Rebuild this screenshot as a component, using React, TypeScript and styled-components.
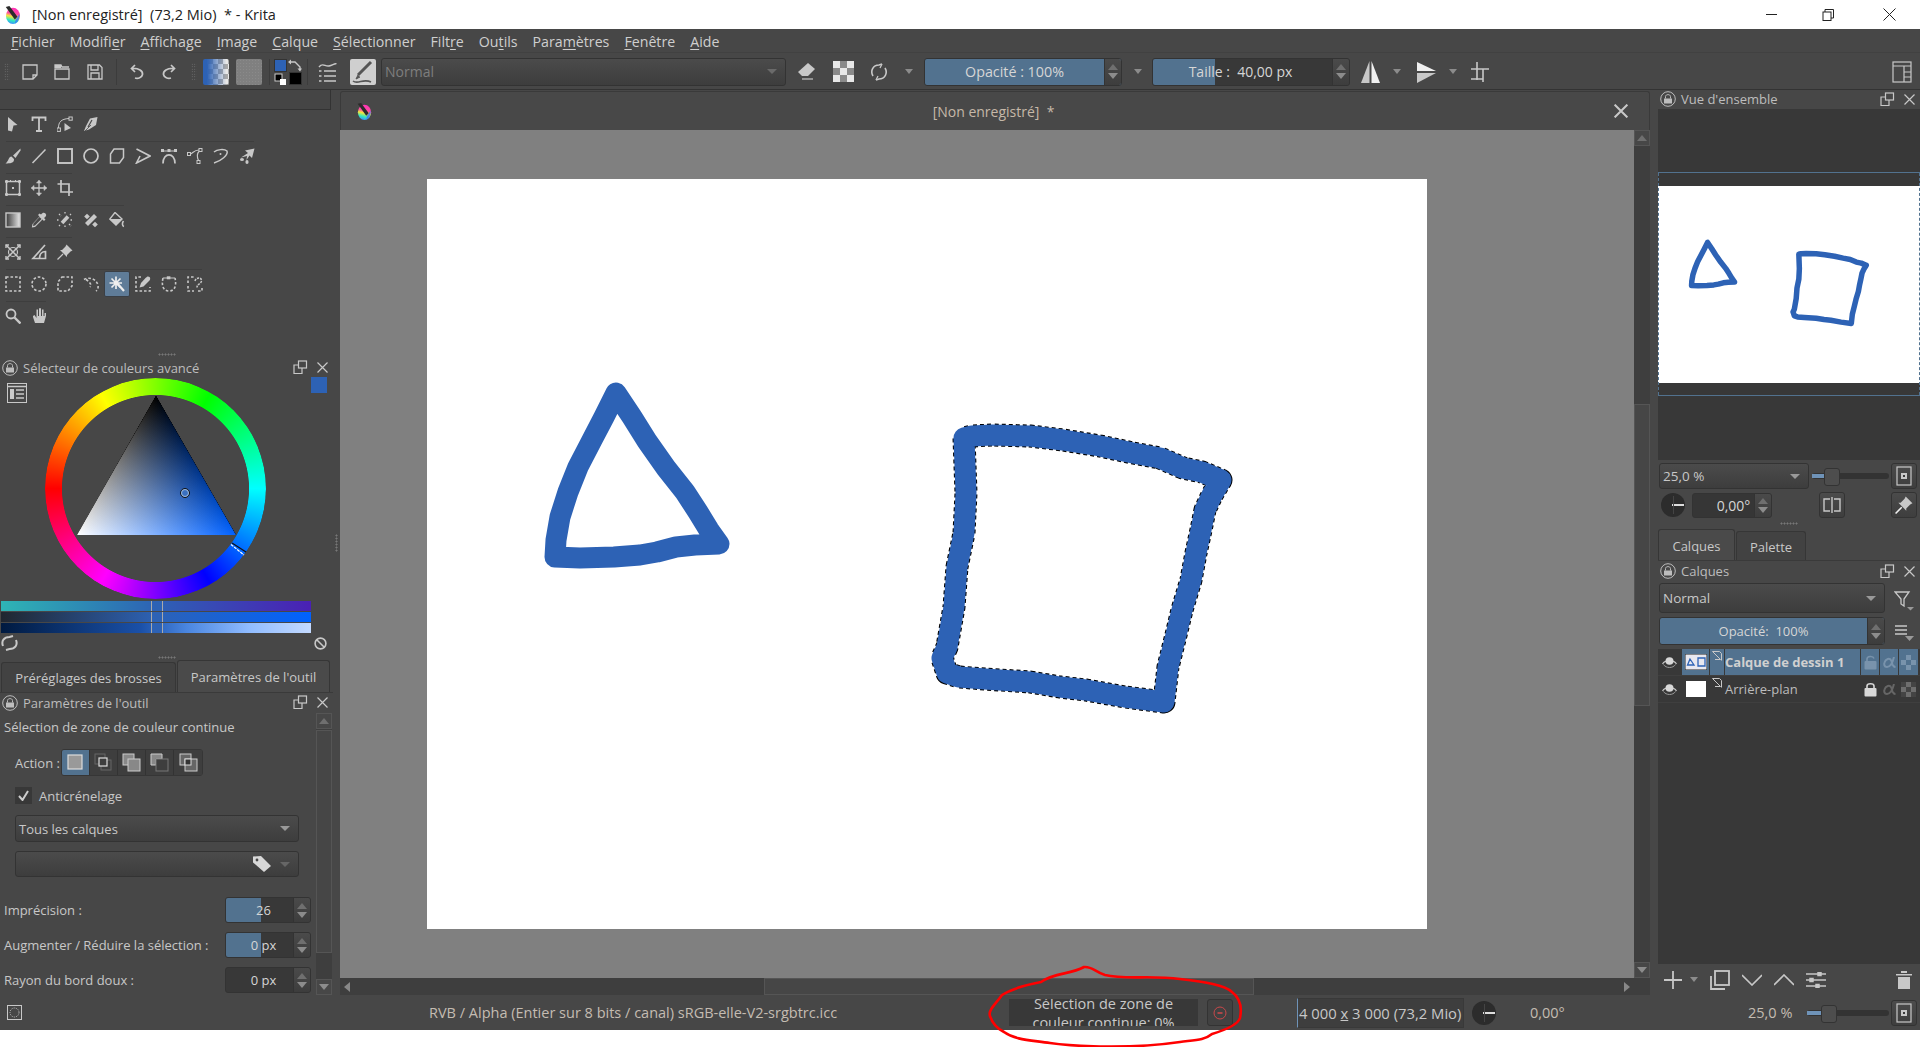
import React from "react";
import styled, { createGlobalStyle } from "styled-components";

const G = "#c8c8c8";
const Global = createGlobalStyle`
  html, body { margin: 0; padding: 0; background: #fff; }
  body { font-family: "Open Sans", "Noto Sans", "Liberation Sans", sans-serif; }
  * { box-sizing: border-box; }
`;

const TRI = "M616 393 L604 417 L592 440 L578 467 L568 492 L560 517 L556 540 L555 557 L580 558 L614 557 L640 555 L657 552 L676 547 L695 545 L719 544 L709 530 L698 512 L685 492 L666 468 L647 441 L632 417 Z";
const SQ = "M964 438 L966 493 L964 533 L957 567 L954 607 L947 647 L942 658 L947 673 L959 677 L985 679 L1030 682 L1060 687 L1086 690 L1125 697 L1164 702 L1168 667 L1176 635 L1182 610 L1191 580 L1196 553 L1201 530 L1205 510 L1212 495 L1221 480 L1202 472 L1183 468 L1160 458 L1133 453 L1100 446 L1063 440 L1030 436 L992 435 L972 436 Z";

const Root = styled.div`
  position: relative; width: 1920px; height: 1047px; overflow: hidden; background: #fff;
  display: flex; flex-direction: column; color: ${G}; font-size: 13px;
`;
const TitleBar = styled.div`
  height: 29px; background: #fff; color: #222; display: flex; align-items: center;
  font-size: 14.5px; padding-left: 4px; flex: none;
`;
const TitleText = styled.span`margin-left: 10px; white-space: pre; flex: 1;`;
const WinBtn = styled.div<{ $mr: number }>`
  width: 16px; height: 16px; margin-right: ${p => p.$mr}px; display: flex; align-items: center; justify-content: center;
`;
const MenuBar = styled.div`
  height: 24px; background: #474747; display: flex; align-items: center; gap: 15px; padding: 1px 0 0 11px; flex: none;
  font-size: 14.2px; border-bottom: 1px solid #414141;
`;
const MenuItem = styled.span`color: #cfcfcf; text-decoration: none; u { text-underline-offset: 2px; }`;
const ToolBar = styled.div`
  height: 37px; background: #474747; display: flex; align-items: center; flex: none; border-bottom: 1px solid #333; padding-top: 1px;
`;
const Slot = styled.div<{ $ml: number; $w: number }>`
  margin-left: ${p => p.$ml}px; width: ${p => p.$w}px; height: 26px; flex: none; display: flex; align-items: center; justify-content: center; position: relative;
`;
const Sep = styled.div<{ $ml: number }>`margin-left: ${p => p.$ml}px; width: 1px; height: 26px; background: #3c3c3c; flex: none;`;
const Grip = styled.div<{ $ml: number }>`
  margin-left: ${p => p.$ml}px; width: 6px; height: 18px; flex: none;
  background-image: radial-gradient(#777 40%, transparent 45%); background-size: 2.5px 2.5px;
`;
const GradientSwatch = styled.div`
  width: 26px; height: 26px; border-radius: 2px;
  background: linear-gradient(90deg, #2d62b5 15%, rgba(45,98,181,0) 90%), repeating-conic-gradient(#a8a8a8 0 25%, #e8e8e8 0 50%) 0 0 / 10px 10px;
`;
const PatternSwatch = styled.div`
  width: 26px; height: 26px; border-radius: 2px; background: #808080;
  background-image: radial-gradient(#8a8a8a 30%, transparent 40%); background-size: 3px 3px;
`;
const FgSwatch = styled.div`position: absolute; left: 0; top: 0; width: 13px; height: 13px; background: #2d62b5; border: 1px solid #333;`;
const BgSwatch = styled.div`position: absolute; right: 0; bottom: 0; width: 13px; height: 13px; background: #000; border: 1px solid #333;`;
const PresetThumb = styled.div`width: 26px; height: 26px; background: #cfcfcf; border-radius: 2px; overflow: hidden;`;
const Combo = styled.div<{ $w?: number; $h?: number; $dim?: boolean; $fs?: number }>`
  width: ${p => (p.$w ? p.$w + "px" : "100%")}; height: ${p => p.$h || 27}px; flex: none;
  border: 1px solid #333; border-radius: 3px; background: linear-gradient(#4b4b4b, #3d3d3d);
  display: flex; align-items: center; padding: 0 5px 0 3px; justify-content: space-between;
  color: ${p => (p.$dim ? "#7e7e7e" : "#c8c8c8")}; font-size: ${p => p.$fs || 13}px; gap: 8px;
`;
const Caret = styled.span<{ $dim?: boolean }>`
  width: 0; height: 0; flex: none; margin-right: 3px;
  border-left: 5px solid transparent; border-right: 5px solid transparent; border-top: 5px solid ${p => (p.$dim ? "#6a6a6a" : "#999")};
`;
const TagIco = styled.svg`flex: none; margin-right: -4px;`;
const SmallCaret = styled.span`
  width: 0; height: 0; border-left: 4.5px solid transparent; border-right: 4.5px solid transparent; border-top: 5px solid #8c8c8c;
`;
const Spin = styled.div<{ $w: number; $h: number; $bg?: string; $ml?: number }>`
  position: relative; width: ${p => p.$w}px; height: ${p => p.$h}px; flex: none; border: 1px solid #333; border-radius: 3px;
  margin-left: ${p => p.$ml || 0}px;
  background: ${p => p.$bg || "#383838"}; display: flex; overflow: hidden;
`;
const SpinField = styled.div<{ $fs?: number }>`position: relative; flex: 1; display: flex; align-items: center; justify-content: center; font-size: ${p => p.$fs || 13}px; color: #d6d6d6; white-space: pre;`;
const SpinFill = styled.div<{ $w: number }>`position: absolute; left: 0; top: 0; bottom: 0; width: ${p => p.$w}px; background: #52728f;`;
const SpinLabel = styled.span<{ $dx?: number }>`position: relative; transform: translateX(${p => p.$dx || 0}px);`;
const SpinArrows = styled.div`
  width: 17px; flex: none; background: linear-gradient(#4a4a4a, #3d3d3d); border-left: 1px solid #333;
  display: flex; flex-direction: column; align-items: center; justify-content: center; gap: 3px;
`;
const Up = styled.span`width: 0; height: 0; border-left: 5px solid transparent; border-right: 5px solid transparent; border-bottom: 6px solid #6f6f6f;`;
const Down = styled.span`width: 0; height: 0; border-left: 5px solid transparent; border-right: 5px solid transparent; border-top: 6px solid #8c8c8c;`;

const Work = styled.div`height: 905px; flex: none; display: flex; min-height: 0; background: #474747;`;
const LeftCol = styled.div`width: 333px; flex: none; display: flex; flex-direction: column;`;
const OptionBar = styled.div`height: 20px; width: 331px; border-bottom: 1px solid #333; border-right: 1px solid #333; background: #454545; flex: none;`;
const Toolbox = styled.div`height: 240px; flex: none; padding-left: 0;`;
const ToolRow = styled.div<{ $line: number }>`
  position: relative; display: flex; height: 32px; align-items: flex-start; padding-top: 1px;
  &::after { content: ""; position: absolute; left: 6px; bottom: 0; height: 1px; background: #3e3e3e; width: ${p => p.$line}px; }
`;
const ToolCell = styled.div<{ $active?: boolean }>`
  width: 26px; height: 26px; display: flex; align-items: center; justify-content: center; flex: none;
  border-radius: 2px; background: ${p => (p.$active ? "#5f7c98" : "transparent")};
  border: 1px solid ${p => (p.$active ? "#3a3f45" : "transparent")};
`;
const DockGrip = styled.div<{ $h: number }>`
  height: ${p => p.$h}px; flex: none; display: flex; align-items: center; justify-content: center;
  &::before { content: ""; width: 18px; height: 3px; background-image: radial-gradient(#777 45%, transparent 50%); background-size: 3px 3px; }
`;
const ColorDock = styled.div`position: relative; height: 296px; flex: none; display: flex; flex-direction: column;`;
const DockTitle = styled.div<{ $h?: number }>`
  height: ${p => p.$h || 20}px; flex: none; display: flex; align-items: center; font-size: 13px; color: #bdbdbd; padding: 0 0 1px 2px; gap: 5px;
`;
const DockTitleText = styled.span`flex: 1;`;
const DockBtns = styled.div`display: flex; gap: 9px; align-items: center; padding-right: 5px;`;
const ColorSettings = styled.div`position: absolute; left: 7px; top: 25px; width: 20px; height: 20px;`;
const Swatch = styled.div`position: absolute; left: 311px; top: 19px; width: 16px; height: 16px; background: #2d62b5;`;
const Wheel = styled.div`
  position: relative; width: 221px; height: 221px; margin-left: 45px; flex: none;
  &::before {
    content: ""; position: absolute; inset: 0; border-radius: 50%;
    background: conic-gradient(from 330deg, #ff0, #0f0 60deg, #0ff 120deg, #00f 180deg, #f0f 240deg, #f00 300deg, #ff0 360deg);
    -webkit-mask: radial-gradient(circle closest-side, transparent 84.3%, #000 85%);
    mask: radial-gradient(circle closest-side, transparent 84.3%, #000 85%);
  }
`;
const WheelArt = styled.svg`position: absolute; left: 0; top: 0; width: 221px; height: 221px; isolation: isolate;`;
const Bars = styled.div`display: flex; flex-direction: column; gap: 1px; margin: 2px 0 0 1px; width: 310px; flex: none;`;
const HBar = styled.div<{ $g: string }>`
  position: relative; height: 10px; background: ${p => p.$g};
  &::before { content: ""; position: absolute; left: 150px; top: 0; bottom: 0; width: 10px; border-left: 1px solid #aaa; border-right: 1px solid #aaa; background: #2d62b5; }
`;
const ColorFoot = styled.div`display: flex; justify-content: space-between; align-items: center; padding: 2px 6px 0 1px; width: 333px;`;
const Tabs = styled.div<{ $pl?: number; $h: number }>`
  height: ${p => p.$h}px; flex: none; display: flex; align-items: flex-end; gap: 1px; padding-left: ${p => p.$pl || 0}px; border-bottom: 1px solid #3a3a3a;
`;
const Tab = styled.div<{ $w: number; $on?: boolean }>`
  width: ${p => p.$w}px; height: ${p => (p.$on ? "100%" : "calc(100% - 2px)")}; flex: none; display: flex; align-items: center; justify-content: center; padding-top: 1px;
  background: ${p => (p.$on ? "#4a4a4a" : "#424242")}; border: 1px solid #363636; border-bottom: none; border-radius: 3px 3px 0 0; font-size: 13px; color: #c8c8c8;
`;
const ToolDock = styled.div`flex: 1; display: flex; flex-direction: column; min-height: 0;`;
const ToolBody = styled.div`flex: 1; display: flex; min-height: 0;`;
const ToolContent = styled.div`width: 316px; flex: none; display: flex; flex-direction: column; position: relative;`;
const Desc = styled.div`height: 28px; flex: none; display: flex; align-items: center; padding-left: 4px; font-size: 13px;`;
const ActionRow = styled.div`display: flex; align-items: center; margin: 8px 0 0 15px; height: 27px; flex: none;`;
const ActionLabel = styled.span`width: 46px; font-size: 13px;`;
const ActionGroup = styled.div`display: flex; border: 1px solid #363636; border-radius: 3px; overflow: hidden; height: 27px;`;
const ActionBtn = styled.div<{ $on?: boolean }>`
  width: 28px; display: flex; align-items: center; justify-content: center; background: ${p => (p.$on ? "#52728f" : "#3e3e3e")}; border-right: 1px solid #333;
  &:last-child { border-right: none; }
`;
const CheckRow = styled.div`display: flex; align-items: center; gap: 7px; margin: 11px 0 0 15px; height: 17px; flex: none; font-size: 13px;`;
const CheckBox = styled.div`width: 17px; height: 17px; background: #383838; display: flex; align-items: center; justify-content: center;`;
const ComboWrap = styled.div<{ $mt: number }>`margin: ${p => p.$mt}px 0 0 15px; width: 284px; flex: none;`;
const FieldRow = styled.div<{ $mt: number }>`
  display: flex; align-items: center; justify-content: space-between; margin-top: ${p => p.$mt}px; padding-left: 4px; padding-right: 5px; height: 26px; flex: none; font-size: 13px;
`;
const VScroll = styled.div<{ $w: number }>`
  width: ${p => p.$w}px; flex: none; display: flex; flex-direction: column; background: #3e3e3e;
`;
const ScrollBtn = styled.div`height: 16px; flex: none; display: flex; align-items: center; justify-content: center; background: #474747; border: 1px solid #555;`;
const ScrollThumb = styled.div<{ $h: number; $top: number }>`
  height: ${p => p.$h}px; margin-top: ${p => p.$top}px; flex: none; background: #464646; border: 1px solid #555;
`;
const ScrollRest = styled.div`flex: 1;`;

const GapCol = styled.div<{ $w: number }>`width: ${p => p.$w}px; flex: none; position: relative; display: flex; align-items: center; justify-content: center;`;
const VGrip = styled.div`width: 3px; height: 18px; background-image: radial-gradient(#777 45%, transparent 50%); background-size: 3px 3px;`;
const Center = styled.div`width: 1310px; flex: none; display: flex; flex-direction: column; padding-top: 1px;`;
const SubTitle = styled.div`
  height: 39px; flex: none; display: flex; align-items: center; background: #484848; border-top: 1px solid #3a3a3a; border-left: 1px solid #3a3a3a; border-right: 1px solid #3a3a3a; border-radius: 3px 3px 0 0; padding: 0 21px 0 15px;
`;
const SubName = styled.span`flex: 1; text-align: center; color: #c6b8a8; font-size: 14px; white-space: pre;`;
const CanvasRow = styled.div`flex: 1; display: flex; min-height: 0;`;
const CanvasArea = styled.div`flex: 1; background: #808080; padding: 49px 0 0 87px; min-width: 0;`;
const Page = styled.svg`display: block; width: 1000px; height: 750px; background: #fff;`;
const HScroll = styled.div`height: 17px; flex: none; display: flex; background: #3e3e3e;`;
const HBtn = styled.div`width: 14px; flex: none; display: flex; align-items: center; justify-content: center;`;
const HThumb = styled.div`margin-left: 410px; width: 490px; background: #464646; border: 1px solid #555;`;

const RightCol = styled.div`width: 262px; flex: none; display: flex; flex-direction: column; margin-left: 0;`;
const OverDark = styled.div`height: 351px; flex: none; background: #383838; padding-top: 63px;`;
const ThumbFrame = styled.div`
  position: relative; height: 224px; border-top: 1px solid #52728f; border-bottom: 1px solid #52728f; padding-top: 13px;
  &::after { content: ""; position: absolute; inset: 0; border-left: 1px dashed #52728f; border-right: 1px dashed #52728f; }
`;
const Thumb = styled.svg`display: block; width: 262px; height: 197px; background: #fff;`;
const CtrlRow = styled.div<{ $mt: number }>`display: flex; align-items: center; margin-top: ${p => p.$mt}px; padding-left: 1px; height: 26px; flex: none; position: relative;`;
const Dial = styled.div<{ $ml?: number }>`
  width: 24px; height: 24px; border-radius: 50%; background: #2c2c2c; flex: none; margin-left: ${p => p.$ml || 0}px; position: relative;
  &::before { content: ""; position: absolute; left: 11px; top: 11px; width: 12px; height: 2px; background: #ddd; }
  &::after { content: ""; position: absolute; left: 11.5px; top: 3px; height: 18px; width: 1px; background: #444; }
`;
const SquareBtn = styled.div<{ $ml: number }>`
  width: 26px; height: 26px; flex: none; margin-left: ${p => p.$ml}px; border: 1px solid #333; border-radius: 3px; background: linear-gradient(#4b4b4b, #3e3e3e); display: flex; align-items: center; justify-content: center;
`;
const Track = styled.div<{ $w: number; $ml: number; $fill: number }>`
  position: relative; width: ${p => p.$w}px; height: 6px; margin-left: ${p => p.$ml}px; background: #333; border-radius: 3px; flex: none;
  &::before { content: ""; position: absolute; left: 0; top: 1px; bottom: 1px; width: ${p => p.$fill}px; background: #6f93b8; }
  &::after { content: ""; position: absolute; left: ${p => p.$fill}px; top: -5px; width: 14px; height: 16px; border-radius: 3px; background: #4d4d4d; border: 1px solid #333; }
`;
const OpacityRow = styled.div`display: flex; align-items: center; margin-top: 4px; padding-left: 1px; gap: 9px; height: 28px; flex: none;`;
const ComboRow = styled.div`display: flex; align-items: center; margin-top: 1px; padding-left: 1px; gap: 9px; height: 30px; flex: none;`;
const FilterIcon = styled.div`width: 20px; height: 20px; flex: none; margin-top: 6px; margin-left: 0;`;
const LayerList = styled.div`height: 315px; margin-top: 4px; background: #383838; flex: none;`;
const LayerRow = styled.div<{ $sel?: boolean }>`
  display: grid; grid-template-columns: 23px 27px 14px 1fr 18px 18px 19px; column-gap: 1px; height: 27px; padding-right: 2px; border-bottom: 1px solid #3f3f3f;
  & > div { background: ${p => (p.$sel ? "#52728f" : "transparent")}; display: flex; align-items: center; justify-content: center; }
  & > div:nth-child(1) { background: transparent; }
`;
const LayerName = styled.div<{ $sel?: boolean }>`
  justify-content: flex-start !important; font-size: 13px; font-weight: ${p => (p.$sel ? 700 : 400)}; color: ${p => (p.$sel ? "#d0d0d0" : "#bcbcbc")}; white-space: nowrap;
`;
const LayerThumb = styled.div``;
const LayerThumbImg = styled.svg`display: block;`;
const WhiteThumb = styled.span`width: 20px; height: 16px; background: #fff; display: block;`;
const LayerArrowIco = styled.svg`align-self: flex-start; margin-top: 1px;`;
const LayerFoot = styled.div`flex: 1; display: flex; align-items: center; padding: 0 6px 0 5px;`;
const FootIcon = styled.div<{ $ml: number }>`margin-left: ${p => p.$ml}px; width: 20px; height: 20px; flex: none; display: flex; align-items: center; justify-content: center;`;

const StatusBar = styled.div`height: 35px; flex: none; background: #474747; display: flex; align-items: center; font-size: 14.5px; color: #c4bcb2;`;
const StatusMini = styled.div`margin-left: 7px; width: 15px; height: 15px; flex: none; display: flex;`;
const StatusText = styled.span<{ $ml: number; $w?: number }>`margin-left: ${p => p.$ml}px; white-space: nowrap; flex: none; ${p => (p.$w ? `width: ${p.$w}px;` : "")}`;
const ProgressBox = styled.div`margin-left: 171px; width: 189px; height: 27px; background: #383838; flex: none; overflow: hidden; text-align: center; font-size: 14.5px; line-height: 19px; color: #c8c8c8;`;
const ProgressInner = styled.div`margin-top: -5px;`;
const StopBtn = styled.div`margin-left: 9px; width: 26px; height: 27px; border: 1px solid #333; border-radius: 3px; background: #414141; flex: none; display: flex; align-items: center; justify-content: center;`;
const DimBox = styled.div`margin-left: 64px; width: 167px; height: 30px; flex: none; background: #3e3e3e; border: 1px solid #393939; border-left: 1px solid #6f93b8; display: flex; align-items: center; padding-left: 1px; white-space: pre; color: #c8c8c8; font-size: 14.8px;`;
const BottomGap = styled.div`flex: 1; background: #fff;`;
const Overlay = styled.svg`position: absolute; left: 0; top: 0; width: 1920px; height: 1047px; pointer-events: none;`;

const Ico: React.FC<{ s?: number; w?: number; h?: number; vb?: string; children: React.ReactNode }> = ({ s = 16, w, h, vb = "0 0 16 16", children }) => (
  <svg width={w || s} height={h || s} viewBox={vb} fill="none" stroke={G} strokeWidth={1.5}>{children}</svg>
);

const Logo: React.FC<{ s: number; id: string }> = ({ s, id }) => (
  <svg width={s} height={s} viewBox="0 0 20 20">
    <defs>
      <linearGradient id={id} x1="0.6" y1="0" x2="0.4" y2="1">
        <stop offset="0" stopColor="#ff2fb8" />
        <stop offset="0.38" stopColor="#ff50a0" />
        <stop offset="0.55" stopColor="#f4e83a" />
        <stop offset="0.78" stopColor="#30e8c0" />
        <stop offset="1" stopColor="#3a90ff" />
      </linearGradient>
    </defs>
    <ellipse cx="10" cy="11" rx="7.8" ry="9" fill={`url(#${id})`} />
    <path d="M2 1 L6 0 L15 12 L12 15 Z" fill="#2b2b2b" />
    <path d="M17 9C18 13 16 18 12 19.5L13 15Z" fill="#3a70ff" opacity=".8" />
  </svg>
);

const Lock: React.FC<{ open?: boolean }> = ({ open }) => (
  <svg width="16" height="16" viewBox="0 0 16 16" fill="none" stroke="#bdbdbd">
    <circle cx="8" cy="8" r="7.3" />
    <rect x="4" y="7.5" width="8" height="5" fill="#bdbdbd" stroke="none" />
    <path d={open ? "M5.5 7.5V5.5C5.5 3 10 3 10.5 5" : "M5.5 7.5V5.5C5.5 3 10.5 3 10.5 5.5V7.5"} />
  </svg>
);
const FloatIco = () => (
  <svg width="15" height="15" viewBox="0 0 15 15" fill="none" stroke="#c8c8c8" strokeWidth="1.2">
    <rect x="5.5" y="1" width="8" height="7" /><path d="M5.5 5H1V13.5H9V8" />
  </svg>
);
const CloseIco: React.FC<{ s?: number; sw?: number }> = ({ s = 11, sw = 1.2 }) => (
  <svg width={s} height={s} viewBox="0 0 11 11" fill="none" stroke="#c8c8c8" strokeWidth={sw}><path d="M.5 .5L10.5 10.5M10.5 .5L.5 10.5" /></svg>
);
const DockHead: React.FC<{ label: string; h?: number }> = ({ label, h }) => (
  <DockTitle $h={h}>
    <Lock /><DockTitleText>{label}</DockTitleText>
    <DockBtns><FloatIco /><CloseIco /></DockBtns>
  </DockTitle>
);

const dash = { strokeDasharray: "2.6 1.9", strokeWidth: 1.6 };
const toolRows: { line: number; icons: React.ReactNode[] }[] = [
  { line: 248, icons: [
    <path key="a" d="M3 1 L12.5 9 L8.5 9.5 L7 15.5 L3 14.5Z" fill={G} stroke="none" />,
    <path key="b" d="M1.5 5V1.5H14.5V5M8 1.5V15M5 15H11" strokeWidth="1.8" />,
    <g key="c"><path d="M1.5 12C1.5 6 4 3 12 2.5" strokeWidth="1" /><rect x="0" y="12" width="3.4" height="3.4" strokeWidth="1" /><rect x="12" y="1" width="3.2" height="3.2" strokeWidth="1" /><path d="M7.5 7L14 12 7.5 15Z" fill={G} stroke="none" /></g>,
    <g key="d"><path d="M14.5 1L7 2.5 3 10 1 15 6 13.5 13 9Z" fill={G} stroke="none" /><path d="M9 4L5 11" stroke="#474747" strokeWidth="1.2" /><path d="M2 15L8 9" stroke="#474747" strokeWidth=".8" /></g>,
  ] },
  { line: 66, icons: [
    <g key="a" stroke="none" fill={G}><path d="M15.5 .5L8 7.5 10.5 10 15.5 2.5Z" /><path d="M6.5 8.5C3.5 8.5 4 13 .5 15.5 5 15.5 9.5 15 9 11Z" /></g>,
    <path key="b" d="M1.5 15L14.5 1.5" />,
    <rect key="c" x="1" y="1" width="14" height="14" strokeWidth="1.9" />,
    <circle key="d" cx="8" cy="8" r="7" strokeWidth="1.7" />,
    <path key="e" d="M5 1H14.5V9.5L10.5 15H1.5V6Z" strokeWidth="1.5" />,
    <path key="f" d="M1.5 1L15 8 1.5 15 5 8" strokeWidth="1.6" />,
    <g key="g"><path d="M2 15.5C2 4 14 4 14 15.5" strokeWidth="1.7" /><path d="M1 3H15" strokeWidth="1" /><rect x="0" y="1" width="3" height="3" fill={G} stroke="none" /><rect x="6.5" y="1" width="3" height="3" fill={G} stroke="none" /><rect x="13" y="1" width="3" height="3" fill={G} stroke="none" /></g>,
    <g key="h"><rect x=".5" y="4.5" width="3" height="3" strokeWidth="1" /><rect x="12" y=".5" width="3" height="3" strokeWidth="1" /><rect x="10" y="12.5" width="3" height="3" strokeWidth="1" /><path d="M3.5 6C6 5 7 2 12 2M11.5 12.5C10 9 9.5 6 12 3.5" strokeWidth="1.2" /></g>,
    <g key="i"><path d="M1 4C4 1.5 11 .5 14 3 15.5 7 8 13 1 15" strokeWidth="1.5" /><circle cx="7.5" cy="6" r="1" fill={G} stroke="none" /></g>,
    <g key="j" fill={G} stroke="none"><path d="M15.5 .5L6 2.5 9 5 2 9.5 8 8 7.5 12 10.5 7.5 13 10Z" /><ellipse cx="3" cy="11.5" rx="2" ry="1.6" /><ellipse cx="8" cy="14" rx="1.6" ry="2" /></g>,
  ] },
  { line: 118, icons: [
    <g key="a"><rect x="1.5" y="1.5" width="13" height="13" strokeWidth="1.5" /><path d="M0 1.5H3M13 1.5H16M0 14.5H3M13 14.5H16M1.5 0V3M14.5 0V3M1.5 13V16M14.5 13V16M5 0.5H6M10 .5H11" strokeWidth="1.8" /><rect x="7" y="7" width="2" height="2" fill={G} stroke="none" /></g>,
    <g key="b"><path d="M8 .5V15.5M.5 8H15.5" strokeWidth="1.3" /><path d="M5.5 3L8 .3 10.5 3ZM5.5 13L8 15.7 10.5 13ZM3 5.5L.3 8 3 10.5ZM13 5.5L15.7 8 13 10.5Z" fill={G} stroke={G} strokeWidth=".6" /></g>,
    <path key="c" d="M4 0V12H16M.5 4H12V16" strokeWidth="1.7" />,
  ] },
  { line: 66, icons: [
    <g key="a"><defs><linearGradient id="tg"><stop offset="0" stopColor="#3a3a3a" /><stop offset="1" stopColor="#e8e8e8" /></linearGradient></defs><rect x="1" y="1" width="14" height="14" fill="url(#tg)" strokeWidth="1.4" /></g>,
    <g key="b"><path d="M14.5 1.5C13 0 11.5 .5 10 2.5L8.5 1.5 7 3 8.5 4.5 1.5 12 .8 15.5 4 15 11.5 7.5 13 9 14.5 7.5 13 6C15 4.5 16 3 14.5 1.5Z" fill={G} stroke="none" /><path d="M8.5 5L2.5 11.5 2 14 4 13.5 10.5 7" fill="#474747" stroke="none" /></g>,
    <g key="c"><path d="M11 4.5L5 11" strokeWidth="3.6" /><path d="M8 0V2.5M8 13.5V16M0 8H2.5M13.5 8H16M2 2L4 4M12 12L14 14M14 2L13 3M2 14L3 13" strokeWidth="1.3" strokeDasharray="1.5 1" /></g>,
    <g key="d" fill={G} stroke="none"><path d="M11 2L14 5 5 14 2 11Z" /><rect x="2" y="2.5" width="4" height="4" transform="rotate(45 4 4.5)" /><rect x="10" y="10.5" width="4" height="4" transform="rotate(45 12 12.5)" /></g>,
    <g key="e"><path d="M6 .5L.8 7 7 13 13 7Z" strokeWidth="1.4" /><path d="M1 7L7 13 13 7Z" fill={G} stroke="none" /><path d="M14.5 9C13 11 13 14 15 14.5" strokeWidth="1.6" /></g>,
  ] },
  { line: 196, icons: [
    <g key="a"><path d="M1 1L15 15M15 1L1 15" strokeWidth="1.5" /><circle cx="8" cy="8" r="4.5" strokeWidth="1.2" /><path d="M1 4V1H4M12 1H15V4M1 12V15H4M12 15H15V12" strokeWidth="1.4" /></g>,
    <path key="b" d="M14 1L2 14.5H14.5V7.5C11 7.5 8.5 10 8.5 14.5" strokeWidth="1.7" />,
    <g key="c"><path d="M9.5 .5L15.5 6.5 13.5 7.5 10 11 10 13 3 6 5 6 8.5 2.5Z" fill={G} stroke="none" /><path d="M6 10L.5 15.5" strokeWidth="1.2" /></g>,
  ] },
  { line: 40, icons: [
    <rect key="a" x="1" y="1" width="14" height="14" {...dash} />,
    <circle key="b" cx="8" cy="8" r="7" {...dash} />,
    <path key="c" d="M5 1H15V10L11 15H1V6Z" {...dash} />,
    <path key="d" d="M1 3.5C5 1 13 2 15 9 15.5 12 14.5 14 13 15M3 3.5C7 6 9 9 7 11" {...dash} />,
    <g key="e"><path d="M8 7L15 15" stroke="#eee" strokeWidth="2.2" /><path d="M7 .5V13M.5 7H13M2.5 2.5L11.5 11.5M11.5 2.5L2.5 11.5" stroke="#eee" strokeWidth="1.7" /></g>,
    <g key="f"><path d="M6 1H1V15H15V11" {...dash} /><path d="M14.5 1C13 0 12 .5 10.5 2L6 7 4.5 11.5 8.5 10.5 14 5C15.5 3.5 15.5 2 14.5 1Z" fill={G} stroke="none" /></g>,
    <g key="g"><path d="M2 2C0 11 3 15 8 15S16 11 14 2" {...dash} /><path d="M2 2H14" strokeWidth="1" /><rect x="5.8" y=".3" width="3.6" height="3" fill={G} stroke="none" /></g>,
    <g key="h"><path d="M1 7V1H7M1 10V15H7M11 15H15V11" {...dash} /><path d="M8 5C9 1 15 1 14.5 5 14 8 10 8 10 11.5" strokeWidth="1.5" strokeDasharray="2.2 1" /></g>,
  ] },
  { line: 0, icons: [
    <g key="a"><circle cx="6" cy="6" r="4.5" strokeWidth="1.8" /><path d="M9.5 9.5L15.5 15.5" strokeWidth="2.4" /></g>,
    <path key="b" d="M2 8V9L4 15H13L15 8V5H13.5V8H12.5V1.5H11V8H10V.3H8V8H7V1.5H5.5V10L3.5 7Z" fill={G} stroke="none" />,
  ] },
];

const Art: React.FC = () => (
  <g transform="translate(-427 -179)" fill="none" strokeLinejoin="round" strokeLinecap="round">
    <path d={TRI} stroke="#2d62b5" strokeWidth="21" />
    <path d={SQ} stroke="#000" strokeWidth="23" strokeDasharray="4 3" strokeLinecap="butt" />
    <path d={SQ} stroke="#2d62b5" strokeWidth="21" />
  </g>
);
const ArtThumb: React.FC = () => (
  <g transform="translate(-427 -179)" fill="none" strokeLinejoin="round" strokeLinecap="round">
    <path d={TRI} stroke="#2d62b5" strokeWidth="21" />
    <path d={SQ} stroke="#2d62b5" strokeWidth="21" />
  </g>
);

const SpinStep: React.FC = () => <SpinArrows><Up /><Down /></SpinArrows>;

const menu: [string, string, string][] = [
  ["", "F", "ichier"], ["Modifi", "e", "r"], ["", "A", "ffichage"], ["", "I", "mage"], ["", "C", "alque"],
  ["", "S", "électionner"], ["Filt", "r", "e"], ["Ou", "t", "ils"], ["Para", "m", "ètres"], ["", "F", "enêtre"], ["", "A", "ide"],
];

const EyeIco = () => (
  <svg width="15" height="13" viewBox="0 0 15 13" fill="none" stroke="#c8c8c8">
    <path d="M.5 8C3 3.5 12 3.5 14.5 8" strokeWidth="1.1" />
    <ellipse cx="7.5" cy="5" rx="4" ry="3.8" fill="#d8d8d8" stroke="none" />
    <path d="M1.5 8.5C4 12.5 11 12.5 13.5 8.5" stroke="#9a9a9a" />
  </svg>
);
const LayerArrow = () => (
  <LayerArrowIco width="12" height="12" viewBox="0 0 12 12" fill="none" stroke="#c8c8c8">
    <path d="M1.5 1.5H8.5L10.5 3.5V10.5" /><path d="M1.5 1.5L9.5 9.5M4 9.5H9.5" />
  </LayerArrowIco>
);
const AlphaChk: React.FC<{ c: string; d: string }> = ({ c, d }) => (
  <svg width="15" height="15" viewBox="0 0 15 15">
    <rect width="15" height="15" fill={c} />
    <g fill={d}><rect x="5" width="5" height="5" /><rect y="5" width="5" height="5" /><rect x="10" y="5" width="5" height="5" /><rect x="5" y="10" width="5" height="5" /></g>
  </svg>
);
const AlphaSym: React.FC<{ c: string }> = ({ c }) => (
  <svg width="13" height="11" viewBox="0 0 13 11" fill="none" stroke={c} strokeWidth="2"><path d="M11 0C10 4 8 10 4 10 1 10 1 7 1.5 5.5 2.5 2 7 0 8.5 4 9 7 10 10 12.5 10" /></svg>
);
const LockMini: React.FC<{ c: string; open?: boolean }> = ({ c, open }) => (
  <svg width="13" height="15" viewBox="0 0 13 15" fill="none" stroke={c} strokeWidth="1.6">
    <rect x="0.5" y="6" width="12" height="8.5" rx="1" fill={c} stroke="none" />
    <path d={open ? "M3 6V4C3 1 9 .5 10 3.5" : "M3 6V4C3 1 10 1 10 4V6"} />
  </svg>
);
const CanvasOnlyIco = () => (
  <svg width="16" height="20" viewBox="0 0 16 20" fill="none" stroke="#c8c8c8" strokeWidth="1.2">
    <rect x="1" y="1" width="14" height="18" /><rect x="5" y="7" width="6" height="6" fill="#c8c8c8" stroke="none" /><rect x="7" y="9" width="2" height="2" fill="#3a3a3a" stroke="none" />
  </svg>
);

const actionIcons: React.ReactNode[] = [
  <rect key="a" x="2" y="2" width="14" height="14" fill="#999" stroke="#ddd" strokeWidth="1.2" />,
  <g key="b"><rect x="1" y="1" width="10" height="10" stroke="#666" fill="#3e3e3e" /><rect x="7" y="7" width="10" height="10" stroke="#666" fill="#3e3e3e" /><rect x="5" y="5" width="8" height="8" stroke="#ddd" fill="#3e3e3e" strokeWidth="1.2" /></g>,
  <g key="c"><rect x="1" y="1" width="11" height="11" stroke="#ccc" fill="#888" /><rect x="6" y="6" width="12" height="12" stroke="#ccc" fill="#888" /></g>,
  <g key="d"><path d="M1 1H12V6H6V12H1Z" stroke="#ccc" fill="#888" /><rect x="6" y="6" width="12" height="12" stroke="#777" fill="#3e3e3e" /></g>,
  <g key="e"><rect x="1" y="1" width="11" height="11" stroke="#ccc" fill="#666" /><rect x="6" y="6" width="12" height="12" stroke="#ccc" fill="#666" /><rect x="6" y="6" width="6" height="6" fill="#333" stroke="#ddd" /></g>,
];

export default function App() {
  return (
    <Root>
      <Global />
      <TitleBar>
        <Logo s={18} id="lg1" />
        <TitleText>{"[Non enregistré]  (73,2 Mio)  * - Krita"}</TitleText>
        <WinBtn $mr={41}><svg width="11" height="11" viewBox="0 0 11 11" stroke="#222"><path d="M0 5.5H11" /></svg></WinBtn>
        <WinBtn $mr={45}><svg width="12" height="12" viewBox="0 0 12 12" fill="none" stroke="#222"><rect x="1" y="3" width="8" height="8.5" /><path d="M3 3V.5H11.5V9H9" /></svg></WinBtn>
        <WinBtn $mr={23}><svg width="13" height="13" viewBox="0 0 13 13" stroke="#222" fill="none"><path d="M.5 .5L12.5 12.5M12.5 .5L.5 12.5" /></svg></WinBtn>
      </TitleBar>

      <MenuBar>
        {menu.map(([a, b, c], i) => <MenuItem key={i}>{a}<u>{b}</u>{c}</MenuItem>)}
      </MenuBar>

      <ToolBar>
        <Grip $ml={4} />
        <Slot $ml={12} $w={16}><Ico><path d="M1 1H15V11L11 15H1ZM11 15V11H15" strokeWidth="1.3" /></Ico></Slot>
        <Slot $ml={16} $w={16}><Ico><path d="M1 5V15H15V5ZM1 4V1H7L8 3H15" strokeWidth="1.3" /><path d="M1 1H7V4H1Z" fill={G} stroke="none" /></Ico></Slot>
        <Slot $ml={17} $w={16}><Ico><path d="M1 1H12.5L15 3.5V15H1ZM4 1V6H11V1M4 15V9H12V15" strokeWidth="1.3" /></Ico></Slot>
        <Sep $ml={13} />
        <Slot $ml={13} $w={14}><Ico w={14} vb="0 0 14 16"><path d="M5 1L1.5 4.5 5 8M2 4.5C9 4 13 7 12.5 10.5 12 13.5 8 15 5 14" strokeWidth="1.7" /></Ico></Slot>
        <Slot $ml={18} $w={14}><Ico w={14} vb="0 0 14 16"><path d="M9 1L12.5 4.5 9 8M12 4.5C5 4 1 7 1.5 10.5 2 13.5 6 15 9 14" strokeWidth="1.7" /></Ico></Slot>
        <Grip $ml={15} />
        <Slot $ml={6} $w={26}><GradientSwatch /></Slot>
        <Slot $ml={7} $w={26}><PatternSwatch /></Slot>
        <Sep $ml={7} />
        <Slot $ml={4} $w={28}>
          <FgSwatch /><BgSwatch />
          <svg width="28" height="26" viewBox="0 0 28 26" fill="none"><path d="M15 3H21L26 8V11" stroke={G} strokeWidth="1.4" /><path d="M17 .5L14 3 17 5.5ZM23.5 9.5L26 12.5 28 9.5Z" fill={G} /><rect x="1" y="15" width="7" height="7" fill="#000" stroke="#ccc" /><rect x="6" y="20" width="6" height="6" fill="#fff" /></svg>
        </Slot>
        <Sep $ml={5} />
        <Slot $ml={10} $w={19}><Ico w={19} h={20} vb="0 0 19 20"><path d="M1 5C5 0 7 5 11 4S17 1 18.5 2M6 9H18M6 14H18M6 19H18" strokeWidth="1.5" /><path d="M1 9H3.5M1 14H3.5M1 19H3.5" /></Ico></Slot>
        <Slot $ml={13} $w={26}><PresetThumb><svg width="26" height="26" viewBox="0 0 26 26" fill="none"><path d="M8 16L21 3" stroke="#555" strokeWidth="3" /><path d="M8 16L6 20 10 18" fill="#555" stroke="#555" /><path d="M3 22C8 26 13 19 21 23" stroke="#555" strokeWidth="1.6" /></svg></PresetThumb></Slot>
        <Slot $ml={5} $w={405}><Combo $w={405} $h={28} $dim $fs={14}>Normal<Caret $dim /></Combo></Slot>
        <Slot $ml={11} $w={19}><Ico w={19} h={19} vb="0 0 19 19"><path d="M11 1L18 7 11 14H5L1 10Z" fill={G} stroke="none" /><path d="M5 17H16" strokeWidth="1.2" /></Ico></Slot>
        <Slot $ml={17} $w={21}><svg width="21" height="21" viewBox="0 0 15 15"><rect width="15" height="15" fill="#e8e8e8" /><g fill="#8a8a8a"><rect x="5" width="5" height="5" /><rect y="5" width="5" height="5" /><rect x="10" y="5" width="5" height="5" /><rect x="5" y="10" width="5" height="5" /></g></svg></Slot>
        <Slot $ml={16} $w={18}><Ico w={18} h={18} vb="0 0 18 18"><path d="M3 13C0 8 3 2 9 2L12 1M15 5C18 10 15 16 9 16L6 17" strokeWidth="1.6" /><path d="M12 1L10 5M6 17L8 13" strokeWidth="1.3" /></Ico></Slot>
        <Slot $ml={16} $w={9}><SmallCaret /></Slot>
        <Slot $ml={11} $w={198}>
          <Spin $w={198} $h={28} $bg="#52728f"><SpinField $fs={14.3}>Opacité : 100%</SpinField><SpinStep /></Spin>
        </Slot>
        <Slot $ml={11} $w={9}><SmallCaret /></Slot>
        <Slot $ml={10} $w={198}>
          <Spin $w={198} $h={28}><SpinField $fs={14}><SpinFill $w={62} /><SpinLabel $dx={-2}>Taille :  40,00 px</SpinLabel></SpinField><SpinStep /></Spin>
        </Slot>
        <Slot $ml={10} $w={21}><svg width="21" height="26" viewBox="0 0 21 26"><path d="M9.5 2V24H1Z" fill={G} /><path d="M11.5 2V24H20Z" fill="#f0f0f0" /></svg></Slot>
        <Slot $ml={11} $w={9}><SmallCaret /></Slot>
        <Slot $ml={15} $w={21}><svg width="21" height="26" viewBox="0 0 21 26"><path d="M1 3L20 12H1Z" fill="#f0f0f0" /><path d="M1 14H20L1 24Z" fill={G} /></svg></Slot>
        <Slot $ml={11} $w={9}><SmallCaret /></Slot>
        <Slot $ml={13} $w={20}><Ico w={20} h={22} vb="0 0 20 22"><path d="M7 1V19M1 18H13M1 8H19M13 8V21" strokeWidth="1.6" /></Ico></Slot>
        <Slot $ml={402} $w={20}><Ico w={20} h={22} vb="0 0 20 22"><rect x="1" y="1" width="18" height="20" strokeWidth="1.2" /><path d="M1 5H19M12 5V21M12 11H19M12 16H19" strokeWidth="1.2" /></Ico></Slot>
      </ToolBar>

      <Work>
        <LeftCol>
          <OptionBar />
          <Toolbox>
            {toolRows.map((r, i) => (
              <ToolRow key={i} $line={r.line}>
                {r.icons.map((ic, j) => (
                  <ToolCell key={j} $active={i === 5 && j === 4}><Ico>{ic}</Ico></ToolCell>
                ))}
              </ToolRow>
            ))}
          </Toolbox>
          <DockGrip $h={8} />
          <ColorDock>
            <DockHead label="Sélecteur de couleurs avancé" />
            <ColorSettings>
              <svg width="20" height="20" viewBox="0 0 20 20" fill="none" stroke={G}><rect x=".5" y=".5" width="19" height="19" /><path d="M1 3.5H19" strokeWidth="1.5" /><rect x="3" y="6" width="4" height="10" fill={G} stroke="none" /><path d="M9 7H17M9 11H17M9 15H17" strokeWidth="1.4" /></svg>
            </ColorSettings>
            <Swatch />
            <Wheel>
              <WheelArt viewBox="0 0 221 221">
                <defs>
                  <linearGradient id="vw" gradientUnits="userSpaceOnUse" x1="32" y1="157" x2="151.5" y2="88"><stop offset="0" stopColor="#fff" /><stop offset="1" stopColor="#000" /></linearGradient>
                  <linearGradient id="vb" gradientUnits="userSpaceOnUse" x1="191" y1="157" x2="71.5" y2="88"><stop offset="0" stopColor="#0061ff" /><stop offset="1" stopColor="#000" /></linearGradient>
                </defs>
                <path d="M111 18L32 157H191Z" fill="#000" />
                <path d="M111 18L32 157H191Z" fill="url(#vw)" style={{ mixBlendMode: "plus-lighter" }} />
                <path d="M111 18L32 157H191Z" fill="url(#vb)" style={{ mixBlendMode: "plus-lighter" }} />
                <circle cx="140" cy="115" r="4.5" fill="#3a70c0" stroke="#111" />
                <circle cx="140" cy="115" r="3.5" fill="none" stroke="#bcd" strokeWidth=".8" />
                <path d="M187 165L201 174" stroke="#111" strokeWidth="1.2" />
                <path d="M186 166.5L199 177" stroke="#fff" strokeWidth="1.2" strokeDasharray="3 1" />
              </WheelArt>
            </Wheel>
            <Bars>
              <HBar $g="linear-gradient(90deg,#2eb5b5,#2d62b5 50%,#4a20b5)" />
              <HBar $g="linear-gradient(90deg,#20262f,#2d62b5 50%,#0062ff)" />
              <HBar $g="linear-gradient(90deg,#001a40,#1a50a8 45%,#4a86e0 60%,#90bcff 80%,#c4daff)" />
            </Bars>
            <ColorFoot>
              <svg width="17" height="16" viewBox="0 0 17 16" fill="none" stroke={G} strokeWidth="2"><path d="M2 11C0 6 3 2 8.5 2L12 1M15 5C17 10 14 14 8.5 14L5 15" /></svg>
              <svg width="13" height="13" viewBox="0 0 13 13" fill="none" stroke={G} strokeWidth="1.6"><circle cx="6.5" cy="6.5" r="5.4" /><path d="M2.5 2.5L10.5 10.5" /></svg>
            </ColorFoot>
          </ColorDock>
          <DockGrip $h={6} />
          <Tabs $h={33} $pl={1}>
            <Tab $w={175}>Préréglages des brosses</Tab>
            <Tab $w={153} $on>Paramètres de l'outil</Tab>
          </Tabs>
          <ToolDock>
            <DockHead label="Paramètres de l'outil" />
            <ToolBody>
              <ToolContent>
                <Desc>Sélection de zone de couleur continue</Desc>
                <ActionRow>
                  <ActionLabel>Action :</ActionLabel>
                  <ActionGroup>
                    {actionIcons.map((ic, i) => (
                      <ActionBtn key={i} $on={i === 0}><svg width="19" height="19" viewBox="0 0 19 19" fill="none">{ic}</svg></ActionBtn>
                    ))}
                  </ActionGroup>
                </ActionRow>
                <CheckRow>
                  <CheckBox><svg width="11" height="11" viewBox="0 0 11 11" fill="none" stroke="#ccc" strokeWidth="2"><path d="M1 6L4.5 10 10 1" /></svg></CheckBox>
                  Anticrénelage
                </CheckRow>
                <ComboWrap $mt={11}><Combo $fs={13}>Tous les calques<Caret /></Combo></ComboWrap>
                <ComboWrap $mt={9}>
                  <Combo $h={26}>
                    <span />
                    <TagIco width="44" height="18" viewBox="0 0 44 18"><path d="M0 1.5L8 1 18 11 11 17 0 7.5Z" fill="#d8d8d8" /><circle cx="4" cy="5" r="1.4" fill="#474747" /><path d="M27 7H37L32 12Z" fill="#666" /></TagIco>
                  </Combo>
                </ComboWrap>
                <FieldRow $mt={20}>
                  Imprécision :
                  <Spin $w={86} $h={26}><SpinField><SpinFill $w={35} /><SpinLabel $dx={4}>26</SpinLabel></SpinField><SpinStep /></Spin>
                </FieldRow>
                <FieldRow $mt={9}>
                  Augmenter / Réduire la sélection :
                  <Spin $w={86} $h={26}><SpinField><SpinFill $w={35} /><SpinLabel $dx={4}>0 px</SpinLabel></SpinField><SpinStep /></Spin>
                </FieldRow>
                <FieldRow $mt={9}>
                  Rayon du bord doux :
                  <Spin $w={86} $h={26}><SpinField><SpinLabel $dx={4}>0 px</SpinLabel></SpinField><SpinStep /></Spin>
                </FieldRow>
              </ToolContent>
              <VScroll $w={16}>
                <ScrollBtn><Up /></ScrollBtn>
                <ScrollThumb $h={223} $top={1} />
                <ScrollRest />
                <ScrollBtn><Down /></ScrollBtn>
              </VScroll>
            </ToolBody>
          </ToolDock>
        </LeftCol>
        <GapCol $w={7}><VGrip /></GapCol>
        <Center>
          <SubTitle>
            <Logo s={17} id="lg2" />
            <SubName>{"[Non enregistré]  *"}</SubName>
            <CloseIco s={14} sw={1.6} />
          </SubTitle>
          <CanvasRow>
            <CanvasArea>
              <Page viewBox="0 0 1000 750"><Art /></Page>
            </CanvasArea>
            <VScroll $w={16}>
              <ScrollBtn><Up /></ScrollBtn>
              <ScrollThumb $h={302} $top={258} />
              <ScrollRest />
              <ScrollBtn><Down /></ScrollBtn>
            </VScroll>
          </CanvasRow>
          <HScroll>
            <HBtn><svg width="6" height="10" viewBox="0 0 6 10"><path d="M6 0V10L0 5Z" fill="#888" /></svg></HBtn>
            <HThumb />
            <ScrollRest />
            <HBtn><svg width="6" height="10" viewBox="0 0 6 10"><path d="M0 0V10L6 5Z" fill="#888" /></svg></HBtn>
            <GapCol $w={16} />
          </HScroll>
        </Center>
        <GapCol $w={8} />
        <RightCol>
          <DockHead label="Vue d'ensemble" h={19} />
          <OverDark>
            <ThumbFrame>
              <Thumb viewBox="0 0 999 749"><ArtThumb /></Thumb>
            </ThumbFrame>
          </OverDark>
          <CtrlRow $mt={3}>
            <Combo $w={150} $h={26} $fs={13.5}>25,0 %<Caret /></Combo>
            <Track $w={77} $ml={3} $fill={12} />
            <SquareBtn $ml={2}><CanvasOnlyIco /></SquareBtn>
          </CtrlRow>
          <CtrlRow $mt={3}>
            <Dial $ml={2} />
            <Spin $w={80} $h={25} $bg="#363636" $ml={7}>
              <SpinField $fs={14}><SpinLabel $dx={10}>0,00°</SpinLabel></SpinField><SpinStep />
            </Spin>
            <SquareBtn $ml={47}>
              <svg width="18" height="16" viewBox="0 0 18 16" fill="none" stroke={G} strokeWidth="1.4"><path d="M9 0V16M7 2H1V14H7M11 2H17V14H11" /></svg>
            </SquareBtn>
            <SquareBtn $ml={46}>
              <svg width="18" height="18" viewBox="0 0 16 16"><g fill={G}><path d="M9.5 .5L15.5 6.5 13.5 7.5 10 11 10 13 3 6 5 6 8.5 2.5Z" /></g><path d="M6 10L.5 15.5" stroke="#eee" strokeWidth="1.4" /></svg>
            </SquareBtn>
          </CtrlRow>
          <DockGrip $h={11} />
          <Tabs $h={32} $pl={0}>
            <Tab $w={77} $on>Calques</Tab>
            <Tab $w={70}>Palette</Tab>
          </Tabs>
          <DockHead label="Calques" h={21} />
          <ComboRow>
            <Combo $w={226} $h={30} $fs={13.5}>Normal<Caret /></Combo>
            <FilterIcon>
              <svg width="20" height="20" viewBox="0 0 20 20" fill="none" stroke={G} strokeWidth="1.3"><path d="M1 1H15L10 8V15L7 13V8Z" /><path d="M13 16H20L16.5 19.5Z" fill="#999" stroke="none" /></svg>
            </FilterIcon>
          </ComboRow>
          <OpacityRow>
            <Spin $w={226} $h={28} $bg="#52728f"><SpinField>{"Opacité:  100%"}</SpinField><SpinStep /></Spin>
            <FilterIcon>
              <svg width="20" height="18" viewBox="0 0 20 18" fill="none" stroke={G} strokeWidth="1.5"><path d="M1 2H13M1 6H13M1 10H13" /><path d="M11 12H20L15.5 17Z" fill="#999" stroke="none" /></svg>
            </FilterIcon>
          </OpacityRow>
          <LayerList>
            <LayerRow $sel>
              <div><EyeIco /></div>
              <LayerThumb>
                <LayerThumbImg width="22" height="16" viewBox="0 0 22 16">
                  <rect width="22" height="16" fill="#e8e8f0" stroke="#222" />
                  <path d="M5 5L2.5 11H9ZM13 4H20V12H13Z" fill="none" stroke="#2d62b5" strokeWidth="1.3" />
                </LayerThumbImg>
              </LayerThumb>
              <div><LayerArrow /></div>
              <LayerName $sel>Calque de dessin 1</LayerName>
              <div><LockMini c="#7993ac" open /></div>
              <div><AlphaSym c="#7993ac" /></div>
              <div><AlphaChk c="#52728f" d="#7993ac" /></div>
            </LayerRow>
            <LayerRow>
              <div><EyeIco /></div>
              <LayerThumb><WhiteThumb /></LayerThumb>
              <div><LayerArrow /></div>
              <LayerName>Arrière-plan</LayerName>
              <div><LockMini c="#d8d8d8" /></div>
              <div><AlphaSym c="#666" /></div>
              <div><AlphaChk c="#444" d="#6e6e6e" /></div>
            </LayerRow>
          </LayerList>
          <LayerFoot>
            <FootIcon $ml={0}><svg width="18" height="18" viewBox="0 0 18 18" stroke={G} strokeWidth="1.8"><path d="M9 0V18M0 9H18" /></svg></FootIcon>
            <FootIcon $ml={1}><SmallCaret /></FootIcon>
            <FootIcon $ml={6}><svg width="20" height="20" viewBox="0 0 20 20" fill="none" stroke={G} strokeWidth="1.8"><rect x="5" y="1" width="14" height="14" /><path d="M1 6V19H15" /></svg></FootIcon>
            <FootIcon $ml={12}><svg width="20" height="12" viewBox="0 0 20 12" fill="none" stroke={G} strokeWidth="1.6"><path d="M0 1L10 11 20 1" /></svg></FootIcon>
            <FootIcon $ml={12}><svg width="20" height="12" viewBox="0 0 20 12" fill="none" stroke={G} strokeWidth="1.6"><path d="M0 11L10 1 20 11" /></svg></FootIcon>
            <FootIcon $ml={12}><svg width="20" height="16" viewBox="0 0 20 16" fill="none" stroke={G} strokeWidth="1.5"><path d="M0 2H20M0 8H20M0 14H20" /><rect x="12" y=".5" width="3" height="3" fill={G} /><rect x="4" y="6.5" width="3" height="3" fill={G} /><rect x="10" y="12.5" width="3" height="3" fill={G} /></svg></FootIcon>
            <FootIcon $ml={68}><svg width="18" height="21" viewBox="0 0 18 21"><path d="M1 5H17V6.5H1ZM6 2H12V4H6ZM3 8H15V20H3Z" fill={G} /></svg></FootIcon>
          </LayerFoot>
        </RightCol>
      </Work>

      <StatusBar>
        <StatusMini><svg width="15" height="15" viewBox="0 0 15 15" fill="none" stroke={G}><rect x=".5" y=".5" width="14" height="14" /><circle cx="7.5" cy="7.5" r="4.5" strokeDasharray="1 1.2" /></svg></StatusMini>
        <StatusText $ml={407} $w={409}>RVB / Alpha (Entier sur 8 bits / canal) sRGB-elle-V2-srgbtrc.icc</StatusText>
        <ProgressBox><ProgressInner>Sélection de zone de<br />couleur continue: 0%</ProgressInner></ProgressBox>
        <StopBtn><svg width="14" height="14" viewBox="0 0 14 14" fill="none" stroke="#c9484a"><circle cx="7" cy="7" r="6" /><path d="M4.5 7H9.5" strokeWidth="1.6" /></svg></StopBtn>
        <DimBox>4 000 <u>x</u> 3 000 (73,2 Mio)</DimBox>
        <Dial $ml={8} />
        <StatusText $ml={34} $w={40}>0,00°</StatusText>
        <StatusText $ml={178} $w={41}>25,0 %</StatusText>
        <Track $w={82} $ml={18} $fill={14} />
        <SquareBtn $ml={2}><CanvasOnlyIco /></SquareBtn>
      </StatusBar>
      <BottomGap />

      <Overlay viewBox="0 0 1920 1047">
        <path d="M1084 967C1070 975 1055 972 1041 982C1025 985 1010 990 1002 995C995 1005 988 1010 990 1016C993 1025 1000 1030 1004 1032C1015 1040 1030 1040 1050 1043C1070 1046 1085 1046 1100 1046.5C1130 1047 1160 1045 1180 1042C1195 1040 1205 1040 1212 1034C1225 1030 1238 1025 1240 1018C1242 1008 1240 998 1232 992C1225 985 1205 982 1180 979C1150 975 1125 980 1105 975C1095 972 1092 966 1084 967Z" fill="none" stroke="#f00" strokeWidth="2.6" strokeLinejoin="round" />
      </Overlay>
    </Root>
  );
}
